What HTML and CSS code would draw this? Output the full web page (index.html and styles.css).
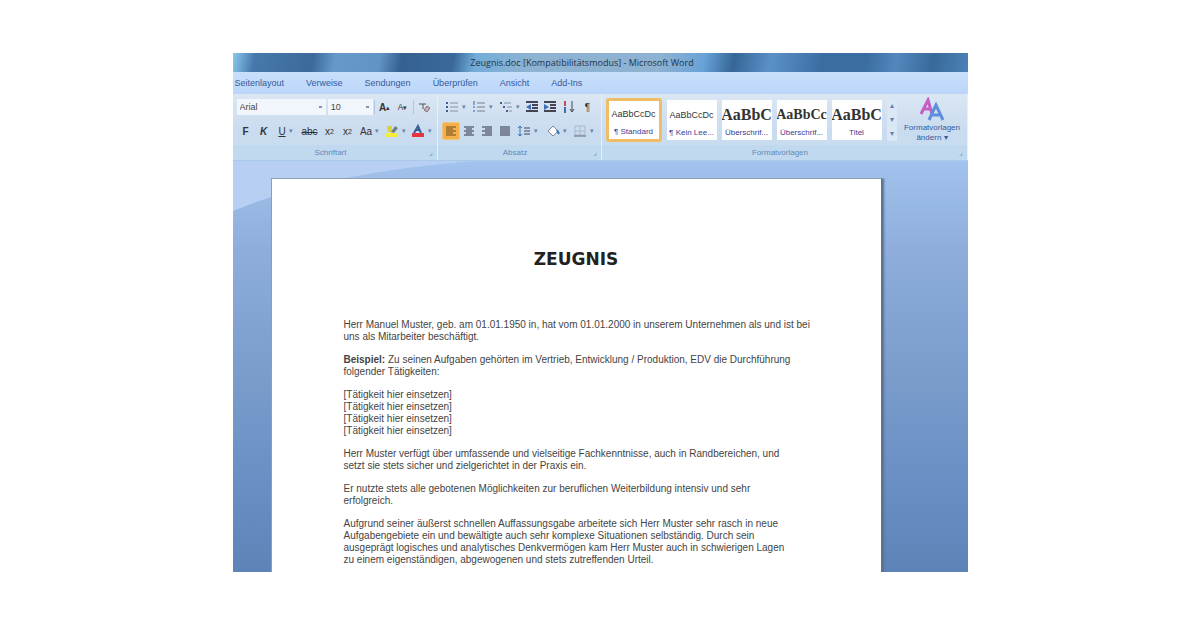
FILE: index.html
```html
<!DOCTYPE html>
<html lang="de">
<head>
  <meta charset="UTF-8" />
  <title>Zeugnis.doc - Microsoft Word</title>
  <link rel="stylesheet" href="styles.css">
</head>
<body>
  <div class="window">
    <header class="titlebar"><span>Zeugnis.doc [Kompatibilitätsmodus] - Microsoft Word</span></header>

    <nav class="tabs">
      <a href="#">Seitenlayout</a>
      <a href="#">Verweise</a>
      <a href="#">Sendungen</a>
      <a href="#">Überprüfen</a>
      <a href="#">Ansicht</a>
      <a href="#">Add-Ins</a>
    </nav>

    <div class="ribbon">
      <!-- Schriftart -->
      <section class="group font-group">
        <div class="tools">
          <div class="row">
            <select class="font-name" aria-label="Schriftart"><option>Arial</option></select>
            <select class="font-size" aria-label="Schriftgrad"><option>10</option></select>
            <span class="sep"></span>
            <button aria-label="Schrift vergrößern"><b>A</b><sup>▴</sup></button>
            <button aria-label="Schrift verkleinern"><small>A</small><sup>▾</sup></button>
            <span class="sep"></span>
            <button aria-label="Formatierung löschen"><svg viewBox="0 0 14 14"><path d="M2 4h7M6 4v5" stroke="#555"/><path d="M7 10l3-4 3 2-3 4z" fill="#d9a5b5" stroke="#777"/></svg></button>
          </div>
          <div class="row">
            <button aria-label="Fett"><b>F</b></button>
            <button aria-label="Kursiv"><b><i>K</i></b></button>
            <button class="drop" aria-label="Unterstrichen"><u>U</u></button>
            <button class="wide" aria-label="Durchgestrichen"><s>abc</s></button>
            <button aria-label="Tiefgestellt">x<sub>2</sub></button>
            <button aria-label="Hochgestellt">x<sup>2</sup></button>
            <button class="drop" aria-label="Groß-/Kleinschreibung">Aa</button>
            <button class="drop" aria-label="Hervorheben"><svg viewBox="0 0 14 14"><path d="M1 9h12v4H1z" fill="#f5ec35"/><path d="M2 2h5v6H3z" fill="#d8d338"/><path d="M6 8l4-6 3 2-4 5z" fill="#73808c"/></svg></button>
            <button class="drop" aria-label="Schriftfarbe"><svg viewBox="0 0 14 14"><path d="M1 9h12v4H1z" fill="#e8343c"/><path d="M3 9l4-7 3 7M5 6h4" fill="none" stroke="#3c5d96" stroke-width="2"/></svg></button>
          </div>
        </div>
        <h2>Schriftart</h2>
      </section>

      <!-- Absatz -->
      <section class="group para-group">
        <div class="tools">
          <div class="row">
            <button class="drop" aria-label="Aufzählung"><svg viewBox="0 0 14 14"><path d="M1 3h2M1 7h2M1 11h2" stroke="#3c5d96" stroke-width="2"/><path d="M5 3h8M5 7h8M5 11h8" stroke="#8590a2"/></svg></button>
            <button class="drop" aria-label="Nummerierung"><svg viewBox="0 0 14 14"><path d="M2 1v4M1 7h2M1 11h2" stroke="#3c5d96"/><path d="M5 3h8M5 7h8M5 11h8" stroke="#777f8c"/></svg></button>
            <button class="drop" aria-label="Liste mit mehreren Ebenen"><svg viewBox="0 0 14 14"><path d="M1 3h2M4 7h2M7 11h2" stroke="#3c5d96" stroke-width="2"/><path d="M5 3h7M8 7h5M10 11h3" stroke="#8590a2"/></svg></button>
            <button aria-label="Einzug verkleinern"><svg viewBox="0 0 14 14"><path d="M1 2h12M7 5h6M7 8h6M1 11h12" stroke="#445" stroke-width="2"/><path d="M6 4v6L1 7z" fill="#3d6fb4"/></svg></button>
            <button aria-label="Einzug vergrößern"><svg viewBox="0 0 14 14"><path d="M1 2h12M7 5h6M7 8h6M1 11h12" stroke="#445" stroke-width="2"/><path d="M1 4v6l5-3z" fill="#3d6fb4"/></svg></button>
            <button aria-label="Sortieren"><svg viewBox="0 0 14 14"><path d="M4 1v5" stroke="#c54b51" stroke-width="2"/><path d="M4 7v6" stroke="#3d6fb4" stroke-width="2"/><path d="M11 1v11M9 9l2 3 2-3" fill="none" stroke="#445"/></svg></button>
            <span class="sep"></span>
            <button aria-label="Absatzmarken">¶</button>
          </div>
          <div class="row">
            <button class="active" aria-label="Linksbündig"><svg viewBox="0 0 14 14"><path d="M2 3h10M2 5h7M2 7h10M2 9h7M2 11h10" stroke="#6b4a18"/></svg></button>
            <button aria-label="Zentriert"><svg viewBox="0 0 14 14"><path d="M2 3h10M4 5h6M2 7h10M4 9h6M2 11h10" stroke="#334"/></svg></button>
            <button aria-label="Rechtsbündig"><svg viewBox="0 0 14 14"><path d="M2 3h10M5 5h7M2 7h10M5 9h7M2 11h10" stroke="#334"/></svg></button>
            <button aria-label="Blocksatz"><svg viewBox="0 0 14 14"><path d="M2 3h10M2 5h10M2 7h10M2 9h10M2 11h10" stroke="#334"/></svg></button>
            <button class="drop" aria-label="Zeilenabstand"><svg viewBox="0 0 14 14"><path d="M3 2v10M1 4l2-2 2 2M1 10l2 2 2-2" fill="none" stroke="#3d6fb4"/><path d="M7 4h6M7 7h6M7 10h6" stroke="#445"/></svg></button>
            <span class="sep"></span>
            <button class="drop" aria-label="Schattierung"><svg viewBox="0 0 14 14"><path d="M2 7l5-5 5 5-5 5z" fill="#fff" stroke="#7b8697"/><path d="M11 6l2 4" stroke="#3d6fb4" stroke-width="2"/></svg></button>
            <button class="drop" aria-label="Rahmen"><svg viewBox="0 0 14 14"><path d="M2 2h10v9H2zM7 2v9M2 7h10" fill="none" stroke="#a9b8ce"/><path d="M1 12h12" stroke="#667"/></svg></button>
          </div>
        </div>
        <h2>Absatz</h2>
      </section>

      <!-- Formatvorlagen -->
      <section class="group style-group">
        <div class="gallery">
          <button class="card selected"><span class="sample">AaBbCcDc</span><span>¶ Standard</span></button>
          <button class="card"><span class="sample">AaBbCcDc</span><span>¶ Kein Lee...</span></button>
          <button class="card"><span class="sample big">AaBbC</span><span>Überschrif...</span></button>
          <button class="card"><span class="sample mid">AaBbCc</span><span>Überschrif...</span></button>
          <button class="card"><span class="sample big">AaBbC</span><span>Titel</span></button>
          <div class="scroll">
            <button aria-label="Nach oben">▴</button>
            <button aria-label="Nach unten">▾</button>
            <button aria-label="Weitere">▾</button>
          </div>
          <button class="change">
            <svg viewBox="0 0 28 26"><path d="M3 17L10 3l4 14M6 12h7" fill="none" stroke="#c65fc4" stroke-width="3"/><path d="M11 23l7-15 7 15M14 18h9" fill="none" stroke="#5b8fdb" stroke-width="3"/></svg>
            <span>Formatvorlagen</span>
            <span>ändern ▾</span>
          </button>
        </div>
        <h2>Formatvorlagen</h2>
      </section>
    </div>

    <main class="workspace">
      <svg class="swoosh" viewBox="0 0 240 50" preserveAspectRatio="none"><path d="M0 0H240Q90 12 0 50z" fill="#b6cff2"/></svg>
      <article class="page">
        <h1>ZEUGNIS</h1>
        <p>Herr Manuel Muster, geb. am 01.01.1950 in, hat vom 01.01.2000 in unserem Unternehmen als und ist bei<br>
          uns als Mitarbeiter beschäftigt.</p>
        <p><b>Beispiel:</b> Zu seinen Aufgaben gehörten im Vertrieb, Entwicklung / Produktion, EDV die Durchführung<br>
          folgender Tätigkeiten:</p>
        <p>[Tätigkeit hier einsetzen]<br>
          [Tätigkeit hier einsetzen]<br>
          [Tätigkeit hier einsetzen]<br>
          [Tätigkeit hier einsetzen]</p>
        <p>Herr Muster verfügt über umfassende und vielseitige Fachkenntnisse, auch in Randbereichen, und<br>
          setzt sie stets sicher und zielgerichtet in der Praxis ein.</p>
        <p>Er nutzte stets alle gebotenen Möglichkeiten zur beruflichen Weiterbildung intensiv und sehr<br>
          erfolgreich.</p>
        <p>Aufgrund seiner äußerst schnellen Auffassungsgabe arbeitete sich Herr Muster sehr rasch in neue<br>
          Aufgabengebiete ein und bewältigte auch sehr komplexe Situationen selbständig. Durch sein<br>
          ausgeprägt logisches und analytisches Denkvermögen kam Herr Muster auch in schwierigen Lagen<br>
          zu einem eigenständigen, abgewogenen und stets zutreffenden Urteil.</p>
      </article>
    </main>
  </div>
</body>
</html>
```
FILE: styles.css
```css
* { box-sizing: border-box; }
body {
  margin: 0; padding: 53px 16px; background: #fff; color: #333;
  font-family: "Liberation Sans", Arial, sans-serif;
}
h1, h2, p { margin: 0; }
button {
  padding: 0; border: 0; background: none; color: #333;
  font-family: inherit; cursor: pointer;
}
.window { max-width: 735px; margin: 0 auto; }

.titlebar {
  height: 19px; display: flex; align-items: center; justify-content: center;
  padding-right: 36px; color: #223548; white-space: nowrap;
  font-family: "Open Sans", sans-serif; font-size: 9px;
  background: linear-gradient(100deg, #8bc8ef 0%, #4679ab 3%, #3c6a9a 11%, #6699ca 14%, #6294c5 20%, #34618f 23%, #3a6999 30%, #72add9 33%, #8db2d2 40%, #8db2d2 58%, #68a2d8 64%, #356697 68%, #5b91c8 73%, #3b6da2 80%, #3b6da2 86%, #5288bd 90%, #39699b 95%, #4b83b7 100%);
}

.tabs {
  height: 22px; display: flex; align-items: center; gap: 22px;
  padding-left: 2px; background: linear-gradient(#c9dffb, #bcd5f9);
}
.tabs a { color: #345a9c; font-size: 9px; text-decoration: none; white-space: nowrap; }

.ribbon {
  display: flex; height: 67px; overflow: hidden;
  background: linear-gradient(#dae6f3, #c9dbef 60%, #c9dff0);
  border-bottom: 1px solid #a9c9e9;
}
.group { display: flex; flex-direction: column; border-right: 1px solid #e5f0fa; }
.group h2 {
  height: 15px; line-height: 15px; font-size: 8px; font-weight: normal;
  color: #6288b9; text-align: center; background: #c0d9ee;
}
.group h2::after { content: "⌟"; float: right; margin-right: 4px; }
.font-group { width: 205px; }
.para-group { width: 164px; }
.style-group { flex: 1; min-width: 0; }
.tools { flex: 1; display: flex; flex-direction: column; gap: 4px; padding: 3px 4px 0; }
.row { height: 20px; display: flex; align-items: center; }
.row button {
  width: 18px; height: 18px; flex: none; font-size: 10px;
  display: flex; align-items: center; justify-content: center;
}
.row sup, .row sub { font-size: 7px; line-height: 7px; }
.row svg { width: 14px; height: 14px; flex: none; }
.row .drop { width: 27px; }
.row .drop::after { content: "▾"; font-size: 7px; color: #6b82a8; margin-left: 3px; }
.row .wide { width: 22px; }
.row .active { background: #f5b04c; border: 1px solid #efc67d; border-radius: 2px; }
.font-group .drop { width: 26px; }
.sep { width: 1px; height: 14px; margin: 0 1px; background: #b0c7e2; }
.row select {
  height: 16px; border: 0; padding: 0 3px; background: #f1f6fc;
  font-family: inherit; font-size: 9px; color: #444;
  appearance: none;
  background-image: linear-gradient(#7f93b3, #7f93b3);
  background-size: 3px 2px; background-position: right 4px center; background-repeat: no-repeat;
}
.font-name { width: 92px; }
.font-size { width: 46px; margin-left: 2px; }

.gallery { flex: 1; display: flex; align-items: center; gap: 5px; padding: 0 4px; }
.card {
  width: 50px; height: 40px; flex: none; background: #fff; overflow: hidden;
  display: flex; flex-direction: column; align-items: center; justify-content: flex-end;
  font-size: 8px; color: #3c3c94; white-space: nowrap;
}
.card > span { height: 14px; line-height: 14px; }
.card .sample { height: 22px; line-height: 22px; font-size: 9px; color: #333; }
.card .big { font-family: "Liberation Serif", serif; font-size: 16px; font-weight: bold; }
.card .mid { font-family: "Liberation Serif", serif; font-size: 14px; font-weight: bold; }
.card.selected { width: 56px; height: 44px; border: 3px solid #f0bd67; border-radius: 3px; }
.scroll { width: 10px; display: flex; flex-direction: column; }
.scroll button { height: 14px; font-size: 8px; color: #6680ad; background: #dae7f5; }
.change {
  flex: 1; display: flex; flex-direction: column; align-items: center;
  font-size: 8px; line-height: 10px; color: #345a9c;
}
.change svg { width: 28px; height: 26px; }

.workspace {
  position: relative; padding: 17px 87px 0 38px;
  background: linear-gradient(#a2c3ed, #8eaddb 22%, #789bca 55%, #698fc4 78%, #5d83b7);
}
.swoosh { position: absolute; left: 0; top: 0; width: 33%; height: 50px; }
.page {
  position: relative; padding: 70px 72px 6px; background: #fff;
  border-left: 1px solid #8a9dbb; border-top: 1px solid #8f9fb8;
  box-shadow: 3px 0 2px #5d7291;
  clip-path: inset(0 -6px 0 -2px);
  font-size: 10px; line-height: 12px; color: #444;
}
.page h1 {
  margin-bottom: 50px; text-align: center; color: #222;
  font-family: "DejaVu Sans", sans-serif; font-size: 17px; line-height: 20px;
}
.page p { white-space: nowrap; }
.page p + p { margin-top: 11px; }
```
